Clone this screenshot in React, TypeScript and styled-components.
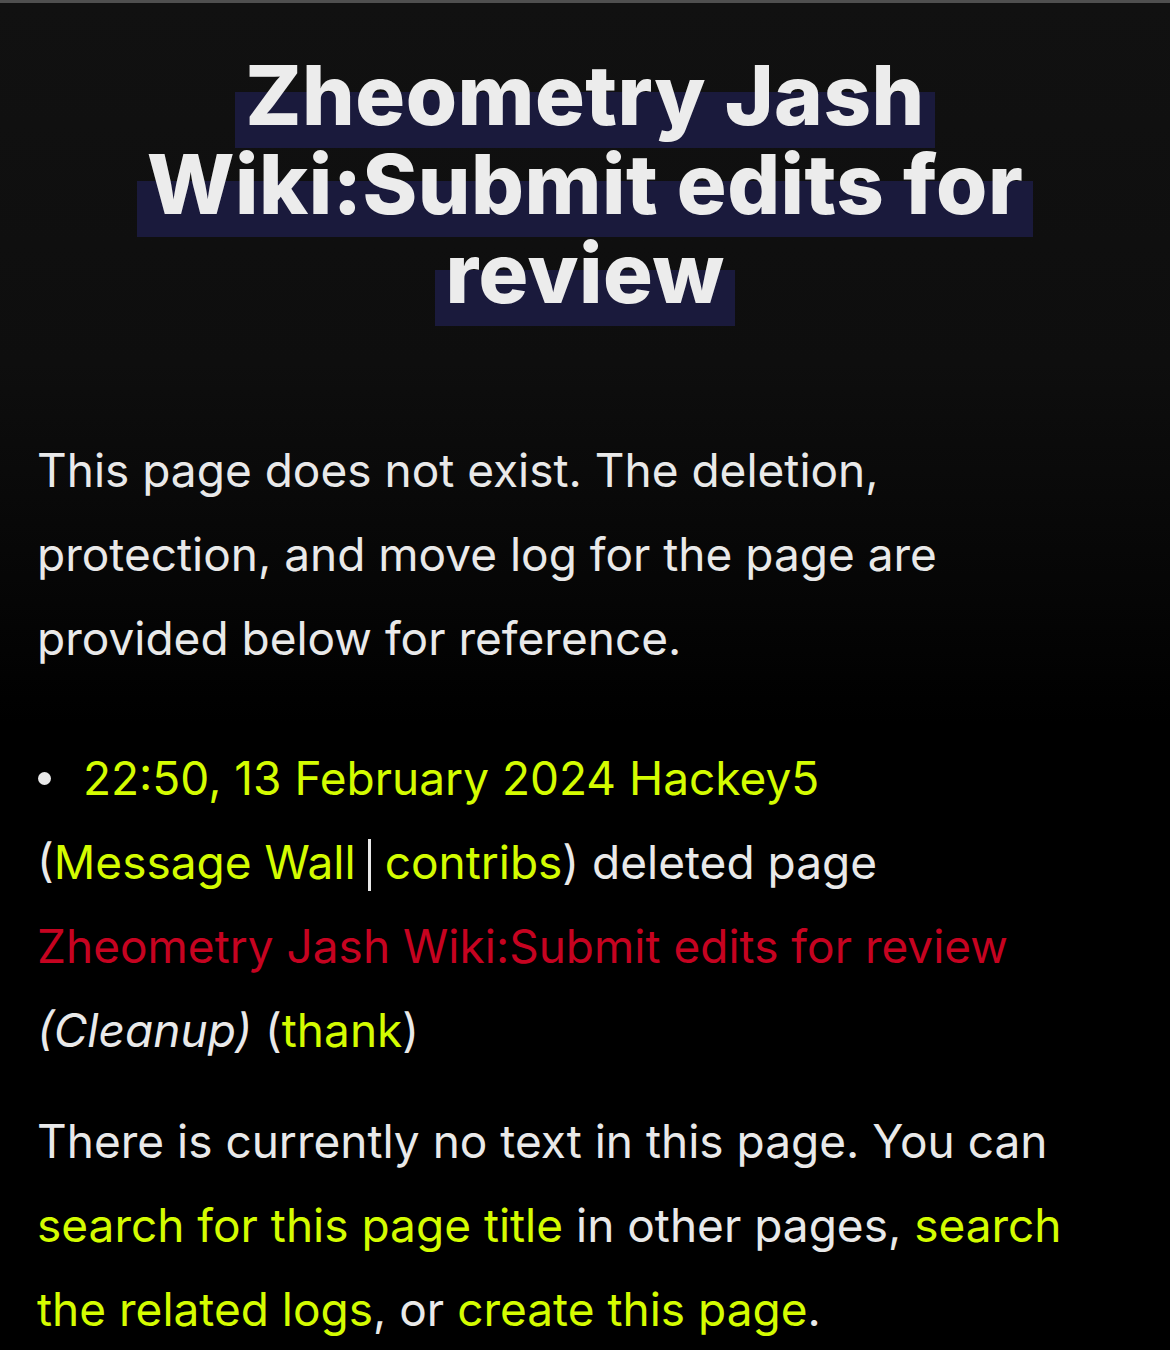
import styled, { createGlobalStyle } from 'styled-components';

const GlobalStyle = createGlobalStyle`
  html, body {
    margin: 0;
    padding: 0;
    background: #000;
  }
`;

const Page = styled.div`
  min-height: 1350px;
  box-sizing: border-box;
  border-top: 3px solid #4f4f4f;
  background: linear-gradient(180deg, #111111 0px, #0e0e0e 360px, #050505 600px, #000000 720px);
  font-family: Inter, "Noto Sans", sans-serif;
  color: #e9e9e9;
  overflow: hidden;
`;

const Header = styled.header`
  padding: 48px 40px 0;
  text-align: center;
`;

const Title = styled.h1`
  margin: 0;
  font-size: 83px;
  line-height: 89px;
  font-weight: 800;
  letter-spacing: 0.5px;
  color: #ececec;
`;

const Highlight = styled.span`
  padding: 0 10px 3px;
  background: linear-gradient(180deg, transparent 0%, transparent 46%, #1a1a3c 46%);
  -webkit-box-decoration-break: clone;
  box-decoration-break: clone;
`;

const Content = styled.main`
  padding: 110px 50px 0 37px;
  font-size: 46px;
  line-height: 84px;
`;

const Paragraph = styled.p<{ $gap?: number }>`
  margin: 0 0 ${({ $gap }) => $gap ?? 0}px;
`;

const LogList = styled.ul`
  list-style: none;
  margin: 0 0 27px;
  padding: 0;
`;

const LogItem = styled.li`
  &::before {
    content: '';
    display: inline-block;
    width: 13px;
    height: 13px;
    border-radius: 50%;
    background: #e9e9e9;
    margin: 0 32px 0 1px;
    vertical-align: 0.22em;
  }
`;

const UserTools = styled.span`
  white-space: nowrap;
`;

const Link = styled.a<{ $missing?: boolean }>`
  color: ${({ $missing }) => ($missing ? '#c60320' : '#d4fc00')};
  text-decoration: none;
`;

const Divider = styled.span`
  display: inline-block;
  width: 3px;
  height: 52px;
  margin: 0 14px 0 12px;
  background: #e9e9e9;
  vertical-align: -12px;
`;

const Comment = styled.em`
  font-style: italic;
`;

export default function App() {
  return (
    <Page>
      <GlobalStyle />
      <Header>
        <Title>
          <Highlight>Zheometry Jash Wiki:Submit edits for review</Highlight>
        </Title>
      </Header>
      <Content>
        <Paragraph $gap={56}>
          This page does not exist. The deletion, protection, and move log for the page are
          provided below for reference.
        </Paragraph>
        <LogList>
          <LogItem>
            <Link href="#">22:50, 13 February 2024</Link> <Link href="#">Hackey5</Link>{' '}
            <UserTools>
              (<Link href="#">Message Wall</Link>
              <Divider />
              <Link href="#">contribs</Link>)
            </UserTools>{' '}
            deleted page{' '}
            <Link href="#" $missing>Zheometry Jash Wiki:Submit edits for review</Link>{' '}
            <Comment>(Cleanup)</Comment> (<Link href="#">thank</Link>)
          </LogItem>
        </LogList>
        <Paragraph>
          There is currently no text in this page. You can{' '}
          <Link href="#">search for this page title</Link> in other pages,{' '}
          <Link href="#">search the related logs</Link>, or <Link href="#">create this page</Link>.
        </Paragraph>
      </Content>
    </Page>
  );
}
